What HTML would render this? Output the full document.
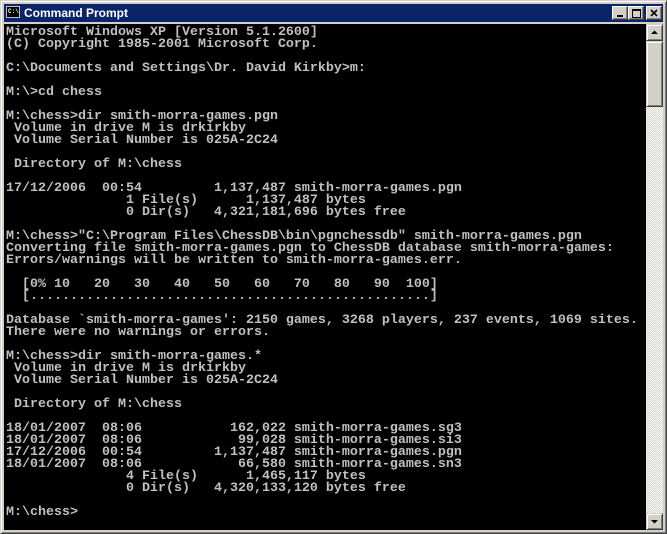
<!DOCTYPE html>
<html><head><style>
*{margin:0;padding:0}
body{width:667px;height:534px;background:#d4d0c8;position:relative;overflow:hidden;font-family:"Liberation Sans",sans-serif}
.win{position:absolute;left:0;top:0;width:665px;height:532px;border-top:1px solid #d4d0c8;border-left:1px solid #d4d0c8;border-right:1px solid #404040;border-bottom:1px solid #404040;box-shadow:inset 1px 1px 0 #fff,inset -1px -1px 0 #808080}
.title{position:absolute;left:4px;top:4px;width:659px;height:18px;background:#0a246a}
.title span{position:absolute;left:20px;top:2px;color:#fff;font-weight:bold;font-size:12px}
.ico{position:absolute;left:2px;top:2px;width:14px;height:12px;background:#000;border:1px solid #c0c0c0;box-sizing:border-box;font:bold 6px "Liberation Mono",monospace;color:#fff;line-height:9px;text-indent:1px}
.btn{position:absolute;top:2px;width:16px;height:14px;background:#d4d0c8;box-sizing:border-box;border-top:1px solid #fff;border-left:1px solid #fff;border-right:1px solid #404040;border-bottom:1px solid #404040;box-shadow:inset -1px -1px 0 #808080}
.con{position:absolute;left:4px;top:24px;width:642px;height:506px;background:#000}
pre{position:absolute;left:2px;top:3px;font-family:"Liberation Mono",monospace;font-weight:bold;font-size:13.33px;line-height:12px;color:#c0c0c0}
.sb{position:absolute;left:646px;top:24px;width:17px;height:506px;background-color:#eeedea;background-image:repeating-conic-gradient(#d4d0c8 0 25%,#fff 0 50%);background-size:2px 2px}
.sbb{position:absolute;left:0;width:17px;background:#d4d0c8;box-sizing:border-box;border-top:1px solid #d4d0c8;border-left:1px solid #d4d0c8;border-right:1px solid #404040;border-bottom:1px solid #404040;box-shadow:inset 1px 1px 0 #fff,inset -1px -1px 0 #808080}
</style></head><body>
<div class="win"></div>
<div class="title"><div class="ico">C:\</div><span>Command Prompt</span>
<div class="btn" style="left:608px"><div style="position:absolute;left:4px;top:8px;width:6px;height:2px;background:#000"></div></div>
<div class="btn" style="left:624px"><div style="position:absolute;left:3px;top:2px;width:9px;height:9px;box-sizing:border-box;border:1px solid #000;border-top:2px solid #000"></div></div>
<div class="btn" style="left:642px"><svg width="14" height="12" style="position:absolute;left:0;top:0"><path d="M4 3L10 9M10 3L4 9" stroke="#000" stroke-width="1.6"/></svg></div>
</div>
<div class="con"><pre>Microsoft Windows XP [Version 5.1.2600]
(C) Copyright 1985-2001 Microsoft Corp.

C:\Documents and Settings\Dr. David Kirkby>m:

M:\>cd chess

M:\chess>dir smith-morra-games.pgn
 Volume in drive M is drkirkby
 Volume Serial Number is 025A-2C24

 Directory of M:\chess

17/12/2006  00:54         1,137,487 smith-morra-games.pgn
               1 File(s)      1,137,487 bytes
               0 Dir(s)   4,321,181,696 bytes free

M:\chess>"C:\Program Files\ChessDB\bin\pgnchessdb" smith-morra-games.pgn
Converting file smith-morra-games.pgn to ChessDB database smith-morra-games:
Errors/warnings will be written to smith-morra-games.err.

  [0% 10   20   30   40   50   60   70   80   90  100]
  [..................................................]

Database `smith-morra-games': 2150 games, 3268 players, 237 events, 1069 sites.
There were no warnings or errors.

M:\chess>dir smith-morra-games.*
 Volume in drive M is drkirkby
 Volume Serial Number is 025A-2C24

 Directory of M:\chess

18/01/2007  08:06           162,022 smith-morra-games.sg3
18/01/2007  08:06            99,028 smith-morra-games.si3
17/12/2006  00:54         1,137,487 smith-morra-games.pgn
18/01/2007  08:06            66,580 smith-morra-games.sn3
               4 File(s)      1,465,117 bytes
               0 Dir(s)   4,320,133,120 bytes free

M:\chess></pre></div>
<div class="sb">
<div class="sbb" style="top:0;height:17px"><svg width="15" height="15" style="position:absolute;left:0;top:0"><path d="M4 9H11L7.5 5.5Z" fill="#000"/></svg></div>
<div class="sbb" style="top:17px;height:66px"></div>
<div class="sbb" style="top:489px;height:17px"><svg width="15" height="15" style="position:absolute;left:0;top:0"><path d="M4 6H11L7.5 9.5Z" fill="#000"/></svg></div>
</div>
</body></html>
